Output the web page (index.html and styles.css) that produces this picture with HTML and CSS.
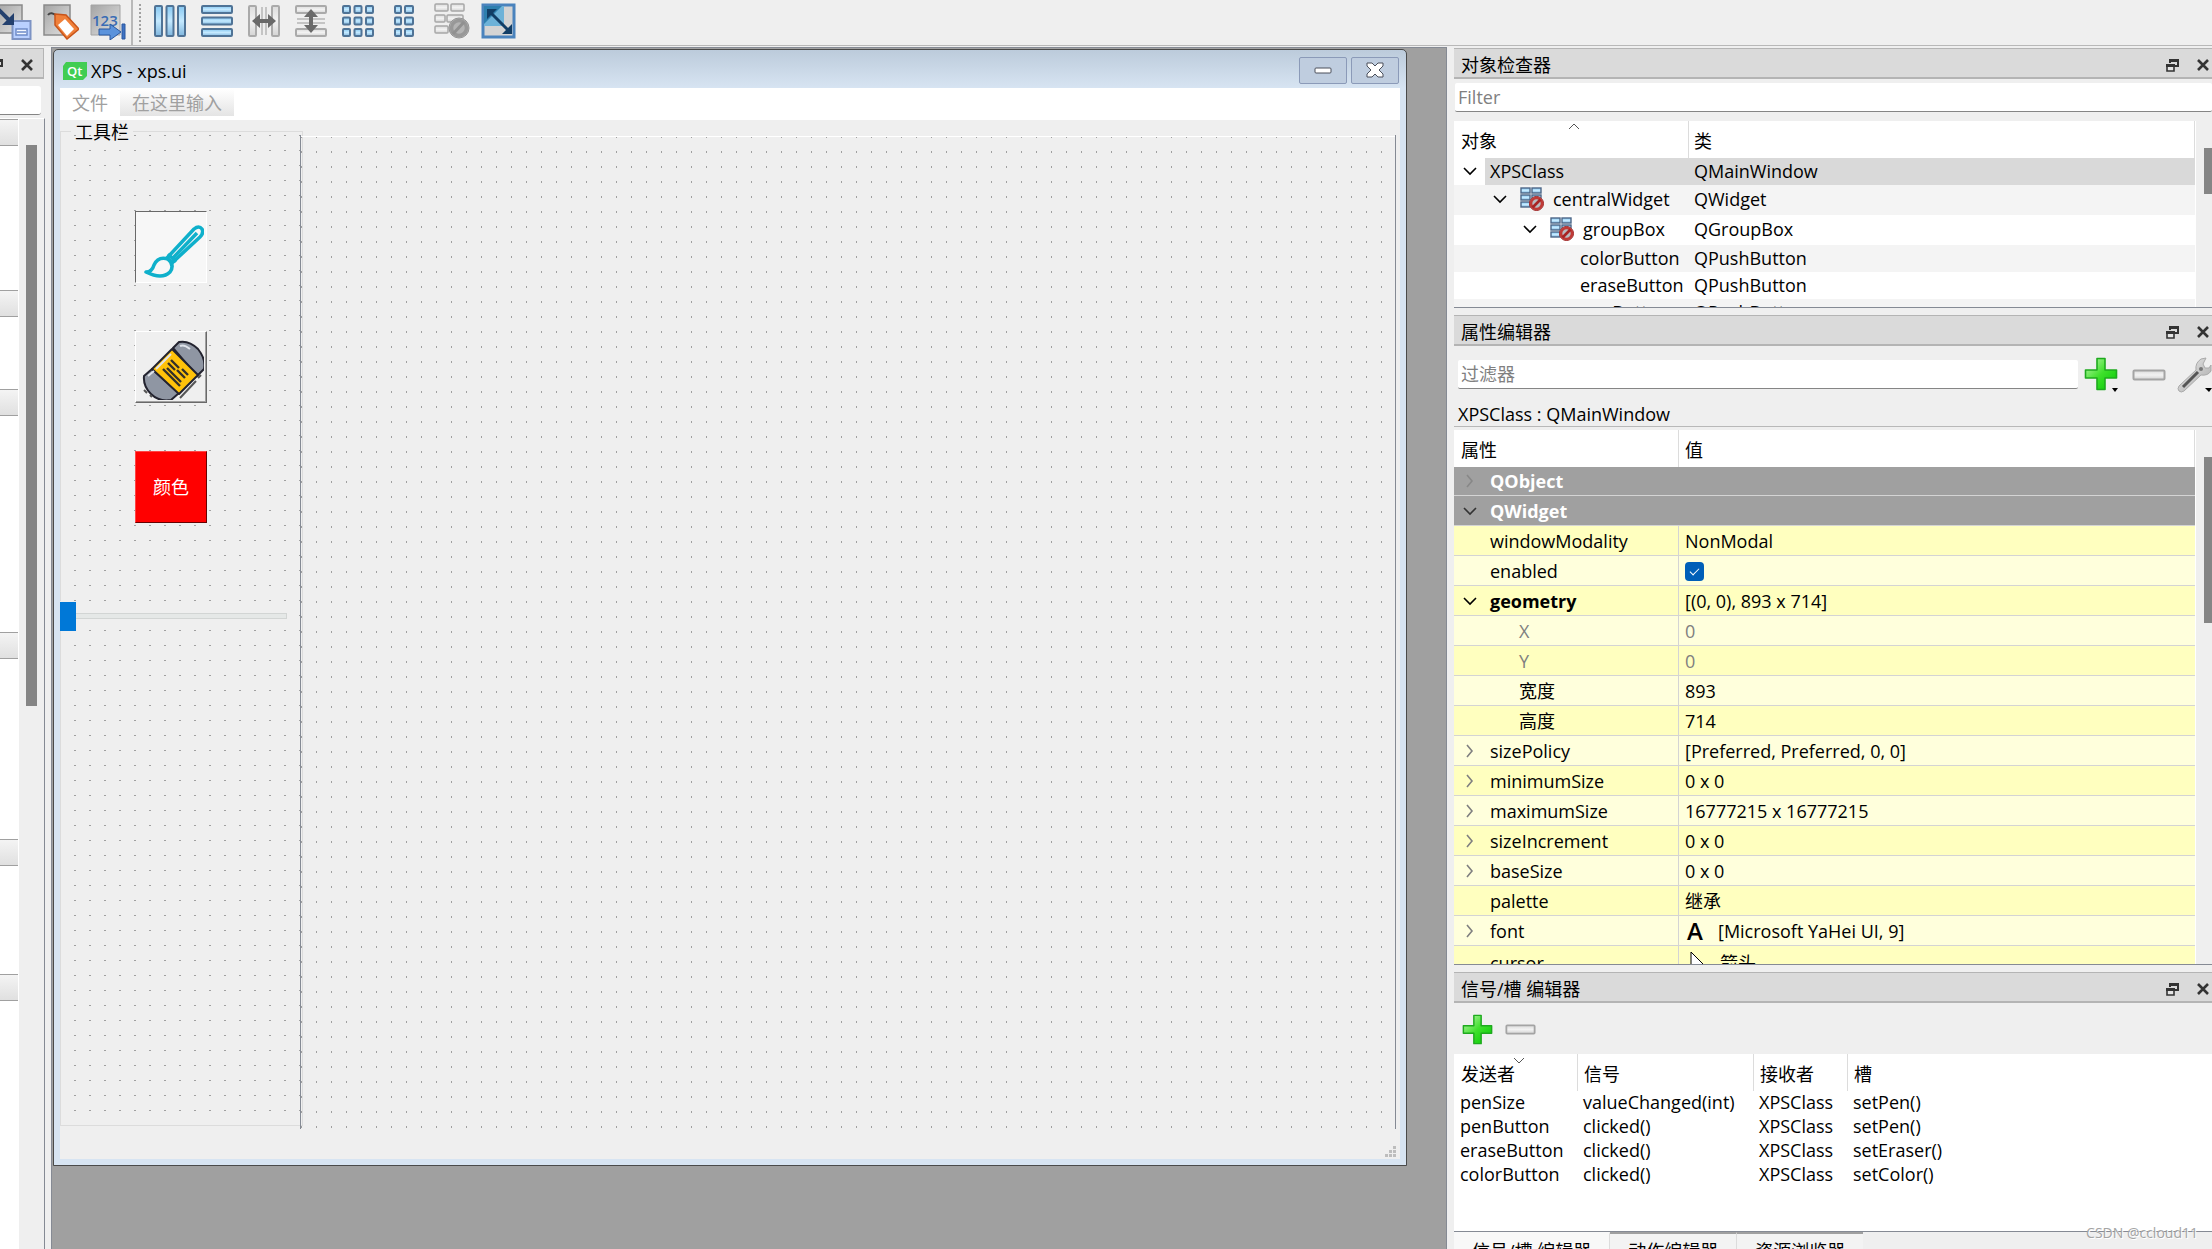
FILE: index.html
```html
<!DOCTYPE html>
<html lang="zh-CN">
<head>
<meta charset="utf-8">
<title>XPS - xps.ui</title>
<link rel="stylesheet" href="styles.css">
</head>
<body>
<svg class="defs" width="0" height="0" aria-hidden="true">
  <defs>
    <linearGradient id="blue" x1="0" y1="0" x2="0" y2="1"><stop offset="0" stop-color="#86c8f2"/><stop offset=".5" stop-color="#c4e9ff"/><stop offset="1" stop-color="#7fb6de"/></linearGradient>
    <linearGradient id="grey" x1="0" y1="0" x2="0" y2="1"><stop offset="0" stop-color="#dcdcdc"/><stop offset=".5" stop-color="#f2f2f2"/><stop offset="1" stop-color="#d4d4d4"/></linearGradient>
    <linearGradient id="green" x1="0" y1="0" x2="1" y2="1"><stop offset="0" stop-color="#c4f7b4"/><stop offset=".5" stop-color="#3fe02c"/><stop offset="1" stop-color="#00c800"/></linearGradient>
    <linearGradient id="panel" x1="0" y1="0" x2="1" y2="1"><stop offset="0" stop-color="#a4a4a4"/><stop offset="1" stop-color="#e2e2e2"/></linearGradient>
    <linearGradient id="metal" x1="0" y1="0" x2="1" y2="1"><stop offset="0" stop-color="#f0f0f0"/><stop offset="1" stop-color="#a4a4a4"/></linearGradient>
    <symbol id="chev-down" viewBox="0 0 16 16"><path d="M2 5l6 6 6-6" fill="none" stroke="currentColor" stroke-width="1.6"/></symbol>
    <symbol id="chev-right" viewBox="0 0 16 16"><path d="M5 2l5 6-5 6" fill="none" stroke="currentColor" stroke-width="1.6"/></symbol>
    <symbol id="sort" viewBox="0 0 12 8"><path d="M1 6l5-5 5 5" fill="none" stroke="currentColor"/></symbol>
    <symbol id="float" viewBox="0 0 14 14"><path d="M5 5V2h8v6h-3" fill="none" stroke="#333" stroke-width="2"/><path d="M4 1h10v3H4z" fill="#333"/><path d="M2 7h7v6H2z" fill="#e4e4e4" stroke="#333" stroke-width="1.6"/><path d="M1 6h9v3H1z" fill="#333"/></symbol>
    <symbol id="close" viewBox="0 0 14 14"><path d="M2 2l10 10M12 2L2 12" stroke="#333" stroke-width="2.6"/></symbol>
    <symbol id="plus" viewBox="0 0 34 34"><path d="M13 1.500h8v11.500h11.500v8H21v11.500h-8V21H1.500v-8H13z" fill="url(#green)" stroke="#1eaa1e" stroke-width="1.600" stroke-linejoin="round"/></symbol>
    <symbol id="minus" viewBox="0 0 34 34"><rect x="1.500" y="12.500" width="31" height="9" rx="1" fill="url(#grey)" stroke="#a4a4a4" stroke-width="2"/></symbol>
    <symbol id="broken" viewBox="0 0 24 24"><g fill="url(#blue)" stroke="#4d6788" stroke-width="1.400"><rect x="1" y="1" width="9" height="5"/><rect x="12" y="1" width="9" height="5"/><rect x="1" y="8" width="9" height="5"/><rect x="12" y="8" width="9" height="5"/><rect x="1" y="15" width="9" height="5"/></g><circle cx="16.500" cy="16.500" r="7" fill="#b8bcc0" stroke="#9c1c1c"/><circle cx="16.500" cy="16.500" r="5.500" fill="none" stroke="#c03a36" stroke-width="2.600"/><path d="M20.500 12.500l-8 8" stroke="#a82424" stroke-width="2.600"/></symbol>
  </defs>
</svg>

<header class="toolbar">
  <div class="bar bar-edit">
    <button class="tool" aria-label="Edit Signals/Slots"><svg viewBox="0 0 36 36"><path d="M0 1h26v28H0z" fill="url(#panel)" stroke="#8a8a8a" stroke-width="1.500"/><rect x="16.500" y="17" width="18" height="18" fill="#b9d0ff" stroke="#7d93c4" stroke-width="2"/><path d="M20 25h11v6H20z" fill="#f4f8ff" stroke="#6d8bc9" stroke-width="1.500"/><path d="M21 28h9" stroke="#6d8bc9" stroke-width="1.500"/><path d="M2 5l11 11" stroke="#23406e" stroke-width="4"/><path d="M18 9v12H6z" fill="#23406e"/></svg></button>
    <button class="tool" aria-label="Edit Buddies"><svg viewBox="0 0 36 36"><path d="M1 1h26v30H1z" fill="url(#panel)" stroke="#8a8a8a" stroke-width="1.500"/><path d="M5 11q3-4 9 1" fill="none" stroke="#444" stroke-width="2"/><path d="M12 10l11 1 13 14-12 10-12-14z" fill="#f0803a" stroke="#c8541a" stroke-width="1.500"/><path d="M22 15l9 10-7 7-9-11z" fill="#fff"/></svg></button>
    <button class="tool" aria-label="Edit Tab Order"><svg viewBox="0 0 36 36"><path d="M1 1h29v30H1z" fill="url(#panel)" stroke="#a4a4a4"/><text x="2" y="22" class="tab-num">123</text><path d="M9 25h11v-5l11 8-11 8v-5H9z" fill="#5b93dc" stroke="#2a58a0"/><path d="M32 20h3v15h-3z" fill="#3f73c4" stroke="#2a58a0"/></svg></button>
  </div>
  <div class="bar bar-layout">
    <span class="grip"></span>
    <button class="tool" aria-label="Lay Out Horizontally"><svg viewBox="0 0 36 36"><g fill="url(#blue)" stroke="#4f7396" stroke-width="2"><rect x="3" y="3" width="7" height="30" rx="1"/><rect x="14.500" y="3" width="7" height="30" rx="1"/><rect x="26" y="3" width="7" height="30" rx="1"/></g></svg></button>
    <button class="tool" aria-label="Lay Out Vertically"><svg viewBox="0 0 36 36"><g fill="url(#blue)" stroke="#4f7396" stroke-width="2"><rect x="3" y="3" width="30" height="7" rx="1"/><rect x="3" y="14.500" width="30" height="7" rx="1"/><rect x="3" y="26" width="30" height="7" rx="1"/></g></svg></button>
    <button class="tool" aria-label="Horizontal Splitter"><svg viewBox="0 0 36 36"><g fill="url(#grey)" stroke="#aaa" stroke-width="2"><rect x="3" y="3" width="7" height="30" rx="1"/><rect x="26" y="3" width="7" height="30" rx="1"/></g><path d="M16 4v28M20 4v28" stroke="#999"/><path d="M6 18l8-7v5h8v-5l8 7-8 7v-5h-8v5z" fill="#6a6a6a"/></svg></button>
    <button class="tool" aria-label="Vertical Splitter"><svg viewBox="0 0 36 36"><g fill="url(#grey)" stroke="#aaa" stroke-width="2"><rect x="3" y="3" width="30" height="7" rx="1"/><rect x="3" y="26" width="30" height="7" rx="1"/></g><path d="M4 16h28M4 20h28" stroke="#999"/><path d="M18 6l7 8h-5v8h5l-7 8-7-8h5v-8h-5z" fill="#6a6a6a"/></svg></button>
    <button class="tool" aria-label="Lay Out in a Grid"><svg viewBox="0 0 36 36"><g fill="url(#blue)" stroke="#4f7396" stroke-width="2"><rect x="3" y="3" width="7" height="7" rx="1"/><rect x="14.500" y="3" width="7" height="7" rx="1"/><rect x="26" y="3" width="7" height="7" rx="1"/><rect x="3" y="14.500" width="7" height="7" rx="1"/><rect x="14.500" y="14.500" width="7" height="7" rx="1"/><rect x="26" y="14.500" width="7" height="7" rx="1"/><rect x="3" y="26" width="7" height="7" rx="1"/><rect x="14.500" y="26" width="7" height="7" rx="1"/><rect x="26" y="26" width="7" height="7" rx="1"/></g></svg></button>
    <button class="tool" aria-label="Lay Out in a Form Layout"><svg viewBox="0 0 36 36"><g fill="url(#blue)" stroke="#4f7396" stroke-width="2"><rect x="8" y="3" width="6" height="7" rx="1"/><rect x="18" y="3" width="8" height="7" rx="1"/><rect x="8" y="14.500" width="6" height="7" rx="1"/><rect x="18" y="14.500" width="8" height="7" rx="1"/><rect x="8" y="26" width="6" height="7" rx="1"/><rect x="18" y="26" width="8" height="7" rx="1"/></g></svg></button>
    <button class="tool" aria-label="Break Layout"><svg viewBox="0 0 36 36"><g fill="url(#grey)" stroke="#a8a8a8" stroke-width="1.500"><rect x="1" y="1" width="13" height="7" rx="1"/><rect x="17" y="1" width="13" height="7" rx="1"/><rect x="1" y="12" width="10" height="7" rx="1"/><rect x="13" y="12" width="16" height="7" rx="1"/><rect x="1" y="23" width="13" height="7" rx="1"/></g><circle cx="25" cy="25" r="10" fill="#b4b4b4" stroke="#949494"/><circle cx="25" cy="25" r="7.500" fill="none" stroke="#989898" stroke-width="3.500"/><path d="M30 19L19 31" stroke="#909090" stroke-width="3"/></svg></button>
    <button class="tool" aria-label="Adjust Size"><svg viewBox="0 0 36 36"><rect x="2" y="2" width="31" height="32" fill="#d4d4d4" stroke="#4a83bd" stroke-width="3"/><path d="M3 3h20v20H3z" fill="#6db2d8"/><path d="M3 3h18L3 21z" fill="#2e7fae"/><path d="M9 9l18 18" stroke="#123e66" stroke-width="3"/><path d="M6 6h10L6 16zM31 31H21l10-10z" fill="#123e66"/></svg></button>
  </div>
</header>

<main class="workspace">
  <aside class="widget-box">
    <div class="dock-title"><button class="icon-btn" aria-label="浮动"><svg width="14" height="14"><use href="#float"/></svg></button><button class="icon-btn" aria-label="关闭"><svg width="14" height="14"><use href="#close"/></svg></button></div>
    <input class="box-filter" type="text" aria-label="过滤器">
    <div class="box-list">
      <div class="box-groups">
        <section class="g1"><h3></h3></section>
        <section class="g2"><h3></h3></section>
        <section class="g3"><h3></h3></section>
        <section class="g4"><h3></h3></section>
        <section class="g5"><h3></h3></section>
        <section class="g6"><h3></h3></section>
      </div>
      <div class="box-scroll"><div class="thumb"></div></div>
    </div>
  </aside>

  <section class="mdi">
    <div class="window">
      <div class="win-title">
        <svg class="qt" width="24" height="18" viewBox="0 0 24 18"><path d="M3 0h21v14l-4 4H0V4z" fill="#41cd52"/><text x="4" y="14" class="qt-text">Qt</text></svg>
        <h1>XPS - xps.ui</h1>
        <button class="win-btn" aria-label="最小化"><svg width="20" height="20" viewBox="0 0 20 20"><rect x="2" y="8" width="16" height="5" rx="1" fill="#fff" stroke="#4a4f5a"/></svg></button>
        <button class="win-btn" aria-label="关闭窗口"><svg width="20" height="20" viewBox="0 0 20 20"><path d="M2 3h5l3 3 3-3h5v3l-4 4 4 4v3h-5l-3-3-3 3H2v-3l4-4-4-4z" fill="#fff" stroke="#4a4f5a"/></svg></button>
      </div>
      <nav class="menubar"><button>文件</button><button class="type-here">在这里输入</button></nav>
      <div class="form-canvas">
        <fieldset class="group">
          <legend>工具栏</legend>
          <button class="w w-pen" aria-label="画笔"><svg width="66" height="66" viewBox="0 0 66 66"><g fill="none" stroke="#0fb0cb" stroke-width="3.500" stroke-linejoin="round"><path d="M29 44L56 15q5-4 8 0 2 4-2 8L34 49z"/><path d="M34 45l25-26M30 40l8 8"/><path d="M8 58q6 0 8-7 4-9 14-6 7 6 2 13-8 8-24 0z"/></g></svg></button>
          <button class="w w-eraser" aria-label="橡皮"><svg width="66" height="66" viewBox="0 0 66 66"><g stroke="#23232f" stroke-width="2" stroke-linejoin="round"><path d="M35 14l6-6q10-2 19 7 8 10 6 20l-7 7z" fill="#8f96a3"/><path d="M14 35L6 42q-1 10 7 18 8 8 20 6l8-7z" fill="#8f96a3"/><path d="M14 35L34 15 60 41 41 60z" fill="#ffc20a"/></g><path d="M42 12q4-2 10 3M10 42l6-5M18 35l15-15" stroke="#dfe3ea" stroke-width="2" fill="none"/><path d="M33 26l8 8M44 35l6 6M30 29l7 7M39 36l8 8M29 34l14 14M25 35l17 17" stroke="#33302a" stroke-width="2.400"/><path d="M42 64l16-17M60 44l3-3M6 56l3 3M12 61l2 2" stroke="#555" stroke-width="2"/></svg></button>
          <button class="w w-color">颜色</button>
          <input class="w w-slider" type="range" min="0" max="99" value="0" aria-label="画笔大小">
        </fieldset>
        <div class="central"></div>
        <svg class="size-grip" width="11" height="11" viewBox="0 0 11 11"><path d="M8 0h3v3H8zM4 4h3v3H4zM8 4h3v3H8zM0 8h3v3H0zM4 8h3v3H4zM8 8h3v3H8z" fill="#bdbdbd"/></svg>
      </div>
    </div>
  </section>

  <aside class="docks">
    <section class="dock dock-objects">
      <header class="dock-title"><h2>对象检查器</h2><button class="icon-btn" aria-label="浮动"><svg width="14" height="14"><use href="#float"/></svg></button><button class="icon-btn" aria-label="关闭"><svg width="14" height="14"><use href="#close"/></svg></button></header>
      <input class="filter" type="text" placeholder="Filter" aria-label="Filter">
      <div class="view">
        <table class="tree">
          <colgroup><col class="c-obj"><col></colgroup>
          <thead><tr><th>对象<svg class="sort" width="12" height="8"><use href="#sort"/></svg></th><th>类</th></tr></thead>
          <tbody>
            <tr class="selected"><td><div class="node"><svg class="chev"><use href="#chev-down"/></svg><span>XPSClass</span></div></td><td>QMainWindow</td></tr>
            <tr class="tall"><td><div class="node d1"><svg class="chev"><use href="#chev-down"/></svg><svg class="lay"><use href="#broken"/></svg><span>centralWidget</span></div></td><td>QWidget</td></tr>
            <tr class="tall"><td><div class="node d2"><svg class="chev"><use href="#chev-down"/></svg><svg class="lay"><use href="#broken"/></svg><span>groupBox</span></div></td><td>QGroupBox</td></tr>
            <tr><td><div class="node leaf">colorButton</div></td><td>QPushButton</td></tr>
            <tr><td><div class="node leaf">eraseButton</div></td><td>QPushButton</td></tr>
            <tr><td><div class="node leaf">penButton</div></td><td>QPushButton</td></tr>
          </tbody>
        </table>
        <div class="scroll scroll-a"><div class="thumb"></div></div>
      </div>
    </section>

    <section class="dock dock-props">
      <header class="dock-title"><h2>属性编辑器</h2><button class="icon-btn" aria-label="浮动"><svg width="14" height="14"><use href="#float"/></svg></button><button class="icon-btn" aria-label="关闭"><svg width="14" height="14"><use href="#close"/></svg></button></header>
      <div class="prop-bar">
        <input class="filter" type="text" placeholder="过滤器" aria-label="过滤器">
        <button class="icon-btn" aria-label="添加动态属性"><svg width="38" height="36" viewBox="0 0 38 36"><use href="#plus" width="34" height="34"/><path d="M28 31h6l-3 4z" fill="#000"/></svg></button>
        <button class="icon-btn" aria-label="移除动态属性"><svg width="34" height="34"><use href="#minus"/></svg></button>
        <button class="icon-btn" aria-label="配置"><svg width="36" height="36" viewBox="0 0 36 36"><path d="M3 29L20 13q-1-7 5-11l5-1-3 6 2 4 4 0 2-3v6q-3 5-10 4L8 34q-3 2-5 0-2-2 0-5z" fill="url(#metal)" stroke="#aaa"/><path d="M7 30L22 15" stroke="#555" stroke-width="3"/><circle cx="25" cy="12" r="2" fill="#777"/><path d="M29 31h7l-3 4z" fill="#000"/></svg></button>
      </div>
      <p class="class-name">XPSClass : QMainWindow</p>
      <div class="view">
        <table class="props">
          <colgroup><col class="c-prop"><col></colgroup>
          <thead><tr><th>属性</th><th>值</th></tr></thead>
          <tbody>
            <tr class="cat closed"><td colspan="2"><div class="node"><svg class="chev"><use href="#chev-right"/></svg>QObject</div></td></tr>
            <tr class="cat"><td colspan="2"><div class="node"><svg class="chev"><use href="#chev-down"/></svg>QWidget</div></td></tr>
            <tr><td><div class="node flat">windowModality</div></td><td>NonModal</td></tr>
            <tr><td><div class="node flat"><label for="enabled">enabled</label></div></td><td><input id="enabled" class="check" type="checkbox" checked></td></tr>
            <tr><td><div class="node"><svg class="chev"><use href="#chev-down"/></svg><b>geometry</b></div></td><td>[(0, 0), 893 x 714]</td></tr>
            <tr class="off"><td><div class="node sub">X</div></td><td>0</td></tr>
            <tr class="off"><td><div class="node sub">Y</div></td><td>0</td></tr>
            <tr><td><div class="node sub">宽度</div></td><td>893</td></tr>
            <tr><td><div class="node sub">高度</div></td><td>714</td></tr>
            <tr class="closed"><td><div class="node"><svg class="chev"><use href="#chev-right"/></svg>sizePolicy</div></td><td>[Preferred, Preferred, 0, 0]</td></tr>
            <tr class="closed"><td><div class="node"><svg class="chev"><use href="#chev-right"/></svg>minimumSize</div></td><td>0 x 0</td></tr>
            <tr class="closed"><td><div class="node"><svg class="chev"><use href="#chev-right"/></svg>maximumSize</div></td><td>16777215 x 16777215</td></tr>
            <tr class="closed"><td><div class="node"><svg class="chev"><use href="#chev-right"/></svg>sizeIncrement</div></td><td>0 x 0</td></tr>
            <tr class="closed"><td><div class="node"><svg class="chev"><use href="#chev-right"/></svg>baseSize</div></td><td>0 x 0</td></tr>
            <tr><td><div class="node flat">palette</div></td><td>继承</td></tr>
            <tr class="closed"><td><div class="node"><svg class="chev"><use href="#chev-right"/></svg>font</div></td><td><div class="val"><span class="glyph-a">A</span>[Microsoft YaHei UI, 9]</div></td></tr>
            <tr class="cursor"><td><div class="node flat">cursor</div></td><td><div class="val"><svg class="arrow" viewBox="0 0 24 24"><path d="M6 1v18l4-4 3 7 3-1-3-7h6z" fill="#fff" stroke="#000"/></svg>箭头</div></td></tr>
          </tbody>
        </table>
        <div class="scroll scroll-b"><div class="thumb"></div></div>
      </div>
    </section>

    <section class="dock dock-signals">
      <header class="dock-title"><h2>信号/槽 编辑器</h2><button class="icon-btn" aria-label="浮动"><svg width="14" height="14"><use href="#float"/></svg></button><button class="icon-btn" aria-label="关闭"><svg width="14" height="14"><use href="#close"/></svg></button></header>
      <div class="sig-bar">
        <button class="icon-btn" aria-label="添加"><svg width="31" height="31"><use href="#plus"/></svg></button>
        <button class="icon-btn" aria-label="删除"><svg width="31" height="31"><use href="#minus"/></svg></button>
      </div>
      <div class="view">
        <table class="signals">
          <colgroup><col class="c-send"><col class="c-sig"><col class="c-recv"><col></colgroup>
          <thead><tr><th>发送者<svg class="sort down" width="12" height="8"><use href="#sort"/></svg></th><th>信号</th><th>接收者</th><th>槽</th></tr></thead>
          <tbody>
            <tr><td>penSize</td><td>valueChanged(int)</td><td>XPSClass</td><td>setPen()</td></tr>
            <tr><td>penButton</td><td>clicked()</td><td>XPSClass</td><td>setPen()</td></tr>
            <tr><td>eraseButton</td><td>clicked()</td><td>XPSClass</td><td>setEraser()</td></tr>
            <tr><td>colorButton</td><td>clicked()</td><td>XPSClass</td><td>setColor()</td></tr>
          </tbody>
        </table>
      </div>
      <div class="tabs" role="tablist"><button class="active" role="tab">信号/槽 编辑器</button><button role="tab">动作编辑器</button><button role="tab">资源浏览器</button></div>
    </section>
  </aside>
</main>
<div class="watermark">CSDN @ccloud11</div>
</body>
</html>
```
FILE: styles.css
```css
* { box-sizing: border-box; }

body {
  margin: 0;
  height: 100vh;
  display: flex;
  flex-direction: column;
  overflow: hidden;
  background: #efefef;
  color: #000;
  font: 18px/24px "Open Sans", "Noto Sans CJK SC", sans-serif;
}

button, input { font: inherit; color: inherit; }
button { padding: 0; border: 0; background: none; }
svg { display: block; flex: none; }
.defs { position: absolute; }
h1, h2, h3, p { margin: 0; font-size: 18px; font-weight: 400; }

/* toolbar */
.toolbar { display: flex; height: 47px; flex: none; }
.bar { display: flex; border-bottom: 1px solid #b8b8b8; height: 46px; padding-top: 4px; }
.bar-edit { width: 133px; gap: 11px; border-right: 2px solid #b8b8b8; }
.bar-edit .tool { margin-left: -4px; margin-right: 4px; }
.bar-layout { flex: 1; gap: 11px; padding-left: 6px; }
.grip { width: 2px; height: 38px; background: repeating-linear-gradient(#a0a0a0 0 2px, transparent 2px 4px); }
.tool { width: 36px; height: 36px; }
.bar-layout .tool { padding-top: 0; margin-top: -1px; }
.tool svg { width: 36px; height: 36px; }
.tab-num { font: 600 15px "Open Sans", sans-serif; fill: #3a6cb4; }

.workspace { flex: 1; min-height: 0; display: grid; grid-template-columns: 51px minmax(0, 1fr) 765px; }

/* dock chrome */
.dock-title {
  display: flex;
  align-items: center;
  height: 31px;
  flex: none;
  padding: 3px 2px 0 7px;
  gap: 17px;
  background: #dadada;
  border-top: 1px solid #b4b4b4;
  border-bottom: 2px solid #b4b4b4;
}
.dock-title h2 { flex: 1; }

/* widget box */
.widget-box { display: flex; flex-direction: column; padding-top: 1px; width: 45px; overflow: hidden; }
.widget-box .dock-title { width: 44px; justify-content: flex-end; padding-right: 9px; border-right: 1px solid #b4b4b4; }
.box-filter { width: 41px; height: 29px; margin: 7px 0 3px; border: 0; border-bottom: 1px solid #858585; border-radius: 0 3px 3px 0; background: #fff; }
.box-list { flex: 1; display: flex; border-right: 1px solid #858a94; border-top: 1px solid #fff; }
.box-groups { width: 19px; background: #fff; }
.box-groups h3 { width: 18px; height: 27px; background: linear-gradient(#f4f4f4, #e0e0e0); border-top: 1px solid #a0a0a0; border-bottom: 1px solid #a0a0a0; }
.g1 { height: 171px; }
.g2 { height: 99px; }
.g3 { height: 243px; }
.g4 { height: 207px; }
.g5 { height: 135px; }
.box-scroll { flex: 1; padding: 26px 7px 0; }
.box-scroll .thumb { height: 561px; background: #858585; }

/* form window */
.mdi { position: relative; border: 1px solid #858a94; border-bottom: 0; background: #a0a0a0; overflow: hidden; }
.window {
  position: absolute;
  left: 1px;
  top: 1px;
  width: 1354px;
  height: 1117px;
  padding: 0 6px 6px;
  display: flex;
  flex-direction: column;
  border: 1px solid #4a4a4a;
  border-radius: 5px 5px 0 0;
  background: linear-gradient(#bccbdb, #d7e4f2 38px);
}
.win-title { display: flex; align-items: center; height: 38px; flex: none; padding: 4px 1px 0 3px; gap: 4px; }
.win-title h1 { flex: 1; }
.qt-text { font: 600 13px "Open Sans", sans-serif; fill: #fff; }
.win-btn { width: 48px; height: 27px; margin-top: -2px; display: grid; place-items: center; border: 1px solid #8b9ab8; border-radius: 2px; background: #bfcddf; }
.menubar { display: flex; height: 32px; flex: none; padding: 1px 0 4px 12px; gap: 12px; background: #fff; color: #a0a0a0; }
.type-here { padding: 0 12px; background: linear-gradient(#fff, #e4e4e4); }

.form-canvas { position: relative; flex: 1; background: #efefef; }
.group {
  position: absolute;
  left: 0;
  top: 11px;
  width: 243px;
  height: 995px;
  margin: 0;
  padding: 0;
  border: 1px solid #dcdcdc;
  background: conic-gradient(at 2px 1px, transparent 75%, #a0a0a0 75%) 13px 3px / 15px 15px;
}
.group legend { position: absolute; left: 10px; top: -12px; padding: 0 4px; background: linear-gradient(#efefef, #efefef) 0 0 / 100% 14px no-repeat; }
.w { position: absolute; left: 74px; width: 72px; height: 72px; display: grid; place-items: center; border: 1px solid; }
.w-pen { top: 79px; background: #f7f7f7; border-color: #696969 #fff #fff #696969; }
.w-eraser { top: 199px; background: #efefef; border-color: #fff #696969 #696969 #fff; box-shadow: inset -1px -1px #a0a0a0; }
.w-color { top: 319px; background: #f00; color: #fff; border-color: #f44 #600 #600 #f44; }
.w-slider { top: 469px; left: -1px; width: 227px; height: 29px; margin: 0; border: 0; appearance: none; background: #efefef; }
.w-slider::-webkit-slider-runnable-track { height: 6px; border: 1px solid #d2d5d4; background: #e5e8e7; }
.w-slider::-webkit-slider-thumb { appearance: none; width: 16px; height: 29px; margin: -12px 0 0 -1px; background: #0078d7; }
.central {
  position: absolute;
  left: 240px;
  top: 15px;
  width: 1096px;
  height: 994px;
  border-left: 1px solid #858a94;
  border-right: 1px solid #858a94;
  background:
    linear-gradient(#fff, #fff) 0 1px / 100% 1px no-repeat,
    conic-gradient(at 1px 2px, transparent 75%, #a0a0a0 75%) 15px 1px / 15px 15px;
}
.size-grip { position: absolute; right: 4px; bottom: 2px; }

/* right docks */
.docks { display: flex; flex-direction: column; min-width: 0; padding: 1px 0 0 7px; gap: 7px; overflow: hidden; }
.dock { display: flex; flex-direction: column; overflow: hidden; }
.dock-objects { height: 260px; flex: none; }
.dock-props { flex: 1; min-height: 0; }
.dock-signals { height: 277px; flex: none; }
.filter { height: 29px; margin: 4px 0 9px 1px; padding: 0 3px; border: 0; border-bottom: 1px solid #858585; border-radius: 2px; background: #fff; min-width: 0; }
.filter::placeholder { color: #808080; opacity: 1; }

.view { flex: 1; min-height: 0; display: flex; overflow: hidden; background: #fff; border-bottom: 1px solid #858a94; }
table { flex: 1; align-self: flex-start; table-layout: fixed; border-collapse: separate; border-spacing: 0; }
th, td { padding: 0; text-align: left; font-weight: 400; white-space: nowrap; overflow: hidden; }
th { position: relative; height: 37px; padding: 3px 6px 0; border-right: 1px solid #dcdcdc; }
th:first-child { padding-left: 7px; }
.sort { position: absolute; top: 2px; left: 50%; margin-left: -3px; color: #555; }
.sort.down { rotate: 180deg; }
.scroll { width: 17px; flex: none; padding-left: 8px; background: #efefef; border-left: 1px solid #fff; }
.scroll .thumb { background: #858585; }
.scroll-a { padding-top: 27px; }
.scroll-a .thumb { height: 46px; }
.scroll-b { padding-top: 27px; }
.scroll-b .thumb { height: 166px; }

.node { display: flex; align-items: center; height: 24px; }
.chev { width: 16px; height: 16px; margin: 0 12px 0 8px; }
.closed .chev { color: #808080; }

.c-obj { width: 235px; }
.tree td { height: 27px; padding-bottom: 2px; }
.tree td + td, .tree th + th { padding-left: 5px; }
.tree .tall td { height: 30px; }
.tree tr:nth-child(even) td { background: #f4f4f4; }
.tree .selected td { background: linear-gradient(#d9d9d9, #d9d9d9) 31px 0 no-repeat; }
.tree .selected td + td { background: #d9d9d9; }
.lay { width: 24px; height: 24px; margin-right: 9px; }
.d1 .chev { margin-left: 38px; }
.d2 .chev { margin-left: 68px; }
.leaf { padding-left: 126px; }

.prop-bar { display: flex; align-items: center; height: 56px; flex: none; padding: 1px 0 0 3px; gap: 10px; }
.prop-bar .filter { flex: 1; margin: 0 -4px 0 1px; }
.class-name { height: 25px; padding-left: 4px; border-bottom: 1px solid #b8b8b8; margin-bottom: 3px; flex: none; }
.c-prop { width: 225px; }
.props td { height: 30px; border-bottom: 1px solid #d4d4d4; background: #ffffdc; }
.props td + td { padding-left: 6px; }
.props td:first-child { border-right: 1px solid #d4d4d4; }
.props tr:nth-child(odd) td { background: #ffffbf; }
.props tbody tr.cat td { background: #a0a0a0; color: #fff; font-weight: 700; border-right: 0; }
.props .cat.closed td { height: 29px; }
.cat .chev { color: #333; }
.cat.closed .chev { color: #888; }
.off { color: #808080; }
.flat { padding-left: 36px; }
.sub { padding-left: 65px; }
.check { appearance: none; display: block; width: 19px; height: 19px; margin: 2px 0 0; border-radius: 4px; background: #005fb8; }
.check::after { content: ""; display: block; width: 8px; height: 4px; margin: 6px 0 0 5px; border: solid #fff; border-width: 0 0 1px 1px; rotate: -45deg; }
.val { display: flex; align-items: center; height: 24px; }
.glyph-a { width: 33px; padding-left: 2px; font-size: 24px; font-weight: 600; }
.arrow { width: 24px; height: 24px; margin-right: 11px; }
.props .cursor td { height: 34px; }

.sig-bar { display: flex; align-items: flex-start; height: 51px; flex: none; padding: 11px 8px 0; gap: 12px; }
.c-send { width: 124px; }
.c-sig { width: 176px; }
.c-recv { width: 94px; }
.signals td { height: 24px; padding-left: 5px; line-height: 22px; padding-bottom: 2px; }
.signals td:first-child { padding-left: 6px; }
.signals th:last-child { border-right: 0; }

.tabs { display: flex; height: 17px; flex: none; overflow: hidden; }
.tabs button { height: 36px; padding: 0 18px; border-top: 2px solid #a0a0a0; border-right: 1px solid #dcdcdc; background: #f3f3f3; }
.tabs .active { border-top-color: #f8f8f8; background: #f8f8f8; }
.tabs button:last-child { border-right: 0; }

.watermark { position: absolute; right: 14px; bottom: 4px; color: #a4a4a4; font-size: 14px; text-shadow: 1px 1px #fff; }
```
